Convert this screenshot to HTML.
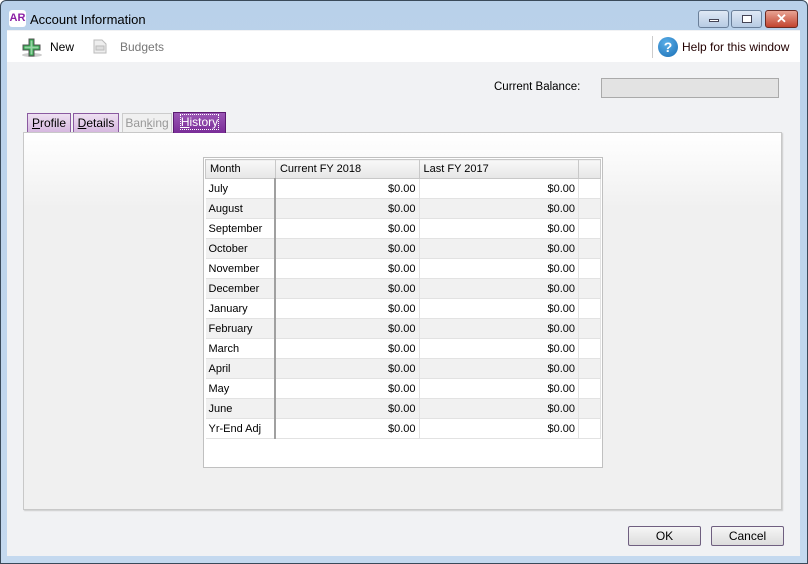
<!DOCTYPE html>
<html><head><style>
*{margin:0;padding:0;box-sizing:border-box}
body{width:808px;height:564px;overflow:hidden;font-family:"Liberation Sans",sans-serif;font-size:12px;color:#000;background:#fff}
.win{position:absolute;left:0;top:0;width:808px;height:564px;background:linear-gradient(#b9d1ea,#c4d9ef);border:1px solid #3a4a5a;border-radius:6px 6px 0 0}
.title{position:absolute;left:29px;top:11px;font-size:13px}
.logo{position:absolute;left:8px;top:9px;width:17px;height:17px;background:#fff;border-radius:3px;font-weight:bold;font-size:11px;color:#8b1fa5;text-align:center;line-height:17px}
.client{position:absolute;left:6px;top:29px;width:793px;height:526px;background:#f1f2f4}
.tb{position:absolute;left:0;top:1px;width:793px;height:31px;background:#fff}
.abs{position:absolute}
.btn{position:absolute;width:73px;height:20px;border:1px solid #6f5f80;border-radius:2px;background:linear-gradient(#f6f6f6,#dcdcdc);text-align:center;line-height:18px}
.tab{position:absolute;top:83px;height:19px;border:1px solid #8a5aa0;border-bottom:none;background:linear-gradient(#eee0f2,#d6b8e0);text-align:center;line-height:18px;font-size:12px}
table{border-collapse:collapse;font-size:11px}
td{height:20px;border-bottom:1px solid #e2e2e2;border-right:1px solid #e2e2e2;padding:0 3px}
tr:nth-child(odd) td{background:#f1f1f1}
th{height:19px;font-weight:normal;text-align:left;padding:0 4px;background:linear-gradient(#f8f8f8,#e6e6e6);border:1px solid #c8c8c8}
td.r{text-align:right}
td.m{border-right:2px solid #a0a0a0}
</style></head><body>
<div class="win">
<div class="logo">AR</div>
<div class="title">Account Information</div>
<div class="abs" style="left:697px;top:9px;width:31px;height:18px;border:1px solid #6a7f99;border-radius:3px;background:linear-gradient(#dfe9f5,#b7cbe3)"><div class="abs" style="left:10px;top:8px;width:10px;height:3px;background:#fff;border:1px solid #445"></div></div>
<div class="abs" style="left:730px;top:9px;width:31px;height:18px;border:1px solid #6a7f99;border-radius:3px;background:linear-gradient(#dfe9f5,#b7cbe3)"><div class="abs" style="left:10px;top:4px;width:10px;height:8px;background:#fff;border:1px solid #445"></div></div>
<div class="abs" style="left:764px;top:9px;width:33px;height:18px;border:1px solid #6b2a22;border-radius:3px;background:linear-gradient(#e8a494,#c2442f);color:#fff;font-weight:bold;text-align:center;line-height:16px;font-size:13px">✕</div>
<div class="client">
<div class="tb">
<svg class="abs" style="left:14px;top:6px" width="22" height="22"><ellipse cx="11" cy="18" rx="10" ry="2" fill="#ccc"/><path d="M8 2h5v6h6v5h-6v6H8v-6H2V8h6z" fill="#2fa64a" stroke="#555" stroke-width="1"/><path d="M9.5 3.5h2v6h6v2h-6v6h-2v-6h-6v-2h6z" fill="#fff" opacity=".5"/></svg>
<div class="abs" style="left:43px;top:9px;font-size:12px">New</div>
<svg class="abs" style="left:84px;top:6px" width="18" height="18"><path d="M3 3h8l4 4v9H3z" fill="#eee" stroke="#bbb"/><rect x="5" y="9" width="8" height="4" fill="#ddd" stroke="#bbb"/></svg>
<div class="abs" style="left:113px;top:9px;color:#777">Budgets</div>
<div class="abs" style="left:645px;top:5px;width:1px;height:22px;background:#ccc"></div>
<div class="abs" style="left:651px;top:6px;width:20px;height:20px;border-radius:50%;background:radial-gradient(circle at 40% 30%,#5aaee8,#1a6fb5);color:#fff;font-weight:bold;text-align:center;line-height:20px;font-size:14px">?</div>
<div class="abs" style="left:675px;top:9px;color:#200">Help for this window</div>
</div>
<div class="abs" style="left:487px;top:51px;font-size:11.5px">Current Balance:</div>
<div class="abs" style="left:594px;top:48px;width:178px;height:20px;background:#e3e3e3;border:1px solid #aaa"></div>
<div class="abs" style="left:16px;top:102px;width:759px;height:378px;background:linear-gradient(#fff,#f0f0f0 20%);border:1px solid #c8c8c8;box-shadow:1px 1px 1px #ccc"></div>
<div class="tab" style="left:20px;width:44px"><u>P</u>rofile</div>
<div class="tab" style="left:66px;width:46px"><u>D</u>etails</div>
<div class="tab" style="left:115px;width:50px;background:#f0f0f0;border-color:#ccc;color:#999">Ban<u>k</u>ing</div>
<div class="tab" style="left:166px;width:53px;top:82px;height:21px;background:linear-gradient(#9b57b5,#7a2d98);color:#fff;border-color:#5a1a70"><span style="outline:1px dotted #fff"><u>H</u>istory</span></div>
<div class="abs" style="left:196px;top:127px;width:400px;height:311px;background:#fff;border:1px solid #c0c0c0;padding:1px">
<table>
<tr><th style="width:70px">Month</th><th style="width:144px">Current FY 2018</th><th style="width:160px">Last FY 2017</th><th style="width:22px"></th></tr>
<tr><td class="m">July</td><td class="r">$0.00</td><td class="r">$0.00</td><td></td></tr>
<tr><td class="m">August</td><td class="r">$0.00</td><td class="r">$0.00</td><td></td></tr>
<tr><td class="m">September</td><td class="r">$0.00</td><td class="r">$0.00</td><td></td></tr>
<tr><td class="m">October</td><td class="r">$0.00</td><td class="r">$0.00</td><td></td></tr>
<tr><td class="m">November</td><td class="r">$0.00</td><td class="r">$0.00</td><td></td></tr>
<tr><td class="m">December</td><td class="r">$0.00</td><td class="r">$0.00</td><td></td></tr>
<tr><td class="m">January</td><td class="r">$0.00</td><td class="r">$0.00</td><td></td></tr>
<tr><td class="m">February</td><td class="r">$0.00</td><td class="r">$0.00</td><td></td></tr>
<tr><td class="m">March</td><td class="r">$0.00</td><td class="r">$0.00</td><td></td></tr>
<tr><td class="m">April</td><td class="r">$0.00</td><td class="r">$0.00</td><td></td></tr>
<tr><td class="m">May</td><td class="r">$0.00</td><td class="r">$0.00</td><td></td></tr>
<tr><td class="m">June</td><td class="r">$0.00</td><td class="r">$0.00</td><td></td></tr>
<tr><td class="m">Yr-End Adj</td><td class="r">$0.00</td><td class="r">$0.00</td><td></td></tr>
</table>
</div>
<div class="btn" style="left:621px;top:496px">OK</div>
<div class="btn" style="left:704px;top:496px">Cancel</div>
</div>
</div>
</body></html>
